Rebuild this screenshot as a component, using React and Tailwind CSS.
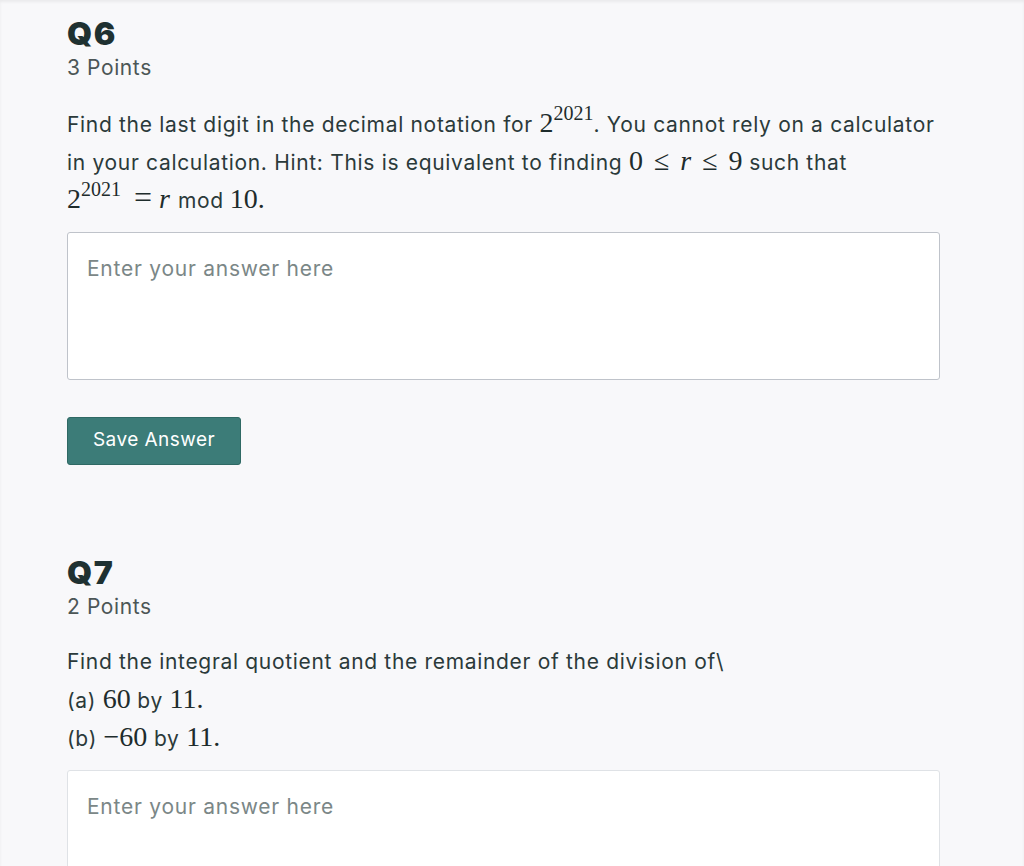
import React from "react";

const M = ({ children, className = "" }) => (
  <span className={"font-['Liberation_Serif',serif] text-[28px] tracking-normal text-[#1e2c2c] " + className}>{children}</span>
);

function Sup({ base, exp }) {
  return (
    <M>
      {base}
      <span className="relative top-[-12px] text-[20px]">{exp}</span>
    </M>
  );
}

function Answer({ light }) {
  return (
    <div
      className={
        "mt-[15px] h-[148px] w-[873px] rounded-[3px] border bg-white px-[19px] pt-[23px] " +
        (light ? "border-[#dfe2e6]" : "border-[#bfc3ca]")
      }
    >
      <div className="text-[21px] leading-[26px] tracking-[0.75px] text-[#7b8787]">Enter your answer here</div>
    </div>
  );
}

function Head({ q, pts, className = "" }) {
  return (
    <div className={className}>
      <h2 className="text-[32px] font-black leading-[40px] tracking-[1.5px] text-[#1f3131]">{q}</h2>
      <div className="mt-[1px] text-[21px] leading-[26px] tracking-[0.6px] text-[#4c5656]">{pts}</div>
    </div>
  );
}

export default function App() {
  return (
    <div className="min-h-[866px] w-[1024px] overflow-hidden bg-[#f8f8fa] font-['Inter',sans-serif] text-[#2b3a3a] shadow-[inset_0_2px_3px_rgba(0,0,0,0.06)]">
      <div className="pl-[67px] pt-[14px]">
        <Head q="Q6" pts="3 Points" />
        <div className="mt-[23px] w-[900px] text-[21px] leading-[37.5px] tracking-[0.68px]">
          <div className="h-[37.5px] whitespace-nowrap">
            Find the last digit in the decimal notation for <Sup base="2" exp="2021" />. You cannot rely on a calculator
          </div>
          <div className="h-[37.5px] whitespace-nowrap">
            in your calculation. Hint: This is equivalent to finding{" "}
            <M>
              0<span className="mx-[11px]">≤</span>
              <i>r</i>
              <span className="mx-[11px]">≤</span>9
            </M>{" "}
            such that
          </div>
          <div className="h-[37.5px] whitespace-nowrap">
            <Sup base="2" exp="2021" />
            <M>
              <span className="ml-[13px] mr-[7px] text-[32px]">=</span>
              <i>r</i>
            </M>
            <span className="ml-[8px] mr-[6px]">mod</span>
            <M>10.</M>
          </div>
        </div>
        <Answer />
        <button className="mt-[37px] flex h-[48px] w-[174px] items-center justify-center rounded-[3px] border border-[#2f6964] bg-[#3c7c78] text-[19px] tracking-[0.45px] text-white">
          Save Answer
        </button>

        <Head q="Q7" pts="2 Points" className="mt-[88px]" />
        <div className="mt-[23px] w-[900px] text-[21px] leading-[37.5px] tracking-[0.68px]">
          <div className="h-[37.5px]">Find the integral quotient and the remainder of the division of\</div>
          <div className="h-[37.5px]">
            (a) <M>60</M> by <M>11.</M>
          </div>
          <div className="h-[37.5px]">
            (b) <M>−60</M> by <M>11.</M>
          </div>
        </div>
        <Answer light />
      </div>
    </div>
  );
}
